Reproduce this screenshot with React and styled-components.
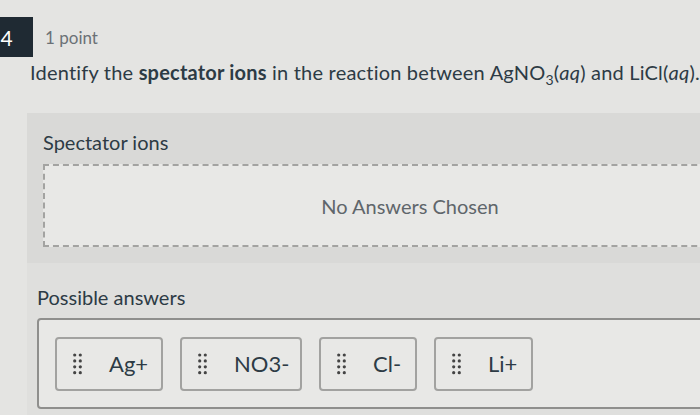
import React from "react";
import styled, { createGlobalStyle } from "styled-components";

const Global = createGlobalStyle`
  html, body { margin: 0; padding: 0; }
  body {
    background: #e4e4e2;
    font-family: Lato, "Open Sans", sans-serif;
    color: #2d3b45;
    overflow: hidden;
    width: 700px;
    height: 415px;
  }
`;

const Page = styled.div`
  width: 700px;
  height: 415px;
  overflow: hidden;
  display: flex;
  flex-direction: column;
`;

const Header = styled.div`
  display: flex;
  align-items: center;
  gap: 12px;
  margin-top: 17px;
  height: 40px;
`;

const Badge = styled.div`
  width: 53px;
  height: 40px;
  margin-left: -20px;
  background: #1f2a33;
  color: #fff;
  font-size: 21px;
  display: flex;
  align-items: center;
  justify-content: center;
`;

const Points = styled.div`
  font-size: 17px;
  color: #6b7176;
`;

const Question = styled.div`
  margin: 2px 0 0 30px;
  font-size: 20px;
  letter-spacing: 0.2px;
  line-height: 26px;
  white-space: nowrap;
  color: #2d3b45;
  sub { font-size: 14px; vertical-align: -5px; line-height: 0; }
`;

const Panel = styled.div`
  margin: 28px 0 0 27px;
  width: 800px;
  height: 150px;
  box-sizing: border-box;
  background: #d9d9d7;
  padding: 17px 0 0 16px;
`;

const Label = styled.div`
  font-size: 20px;
  line-height: 24px;
  color: #2d3b45;
`;

const DropZone = styled.div`
  margin-top: 10px;
  width: 734px;
  height: 83px;
  box-sizing: border-box;
  border: 2px dashed #a3a3a1;
  background: #e8e8e6;
  display: flex;
  align-items: center;
  justify-content: center;
  font-size: 20px;
  color: #5f666b;
`;

const Answers = styled.div`
  margin: 0 0 0 27px;
  padding: 22px 0 0 10px;
  background: #dfdfdd;
  flex: 1;
`;

const AnswerBox = styled.div`
  margin-top: 9px;
  width: 760px;
  height: 91px;
  box-sizing: border-box;
  border: 2px solid #8f8f8d;
  border-radius: 4px;
  background: #e8e8e6;
  display: flex;
  align-items: center;
  gap: 17px;
  padding: 0 0 0 16px;
`;

const Chip = styled.div`
  display: flex;
  align-items: center;
  box-sizing: border-box;
  height: 54px;
  width: ${(p) => p.$w}px;
  border: 2px solid #a2a2a0;
  border-radius: 4px;
  padding-left: 16px;
  font-size: 22px;
  color: #2d3b45;
  gap: 27px;
`;

const Dots = () => (
  <svg width="9" height="22" viewBox="0 0 9 22">
    {[0, 1, 2, 3].map((r) =>
      [0, 1].map((c) => (
        <circle key={`${r}-${c}`} cx={1.7 + c * 5.6} cy={2 + r * 5.9} r="1.6" fill="#444" />
      ))
    )}
  </svg>
);

const chips = [
  { t: "Ag+", w: 108 },
  { t: "NO3-", w: 122 },
  { t: "Cl-", w: 98 },
  { t: "Li+", w: 99 },
];

export default function App() {
  return (
    <Page>
      <Global />
      <Header>
        <Badge>4</Badge>
        <Points>1 point</Points>
      </Header>
      <Question>
        Identify the <b>spectator ions</b> in the reaction between AgNO<sub>3</sub>(<i>aq</i>) and LiCl(<i>aq</i>).
      </Question>
      <Panel>
        <Label>Spectator ions</Label>
        <DropZone>No Answers Chosen</DropZone>
      </Panel>
      <Answers>
        <Label>Possible answers</Label>
        <AnswerBox>
          {chips.map((c) => (
            <Chip key={c.t} $w={c.w}>
              <Dots />
              <span>{c.t}</span>
            </Chip>
          ))}
        </AnswerBox>
      </Answers>
    </Page>
  );
}
